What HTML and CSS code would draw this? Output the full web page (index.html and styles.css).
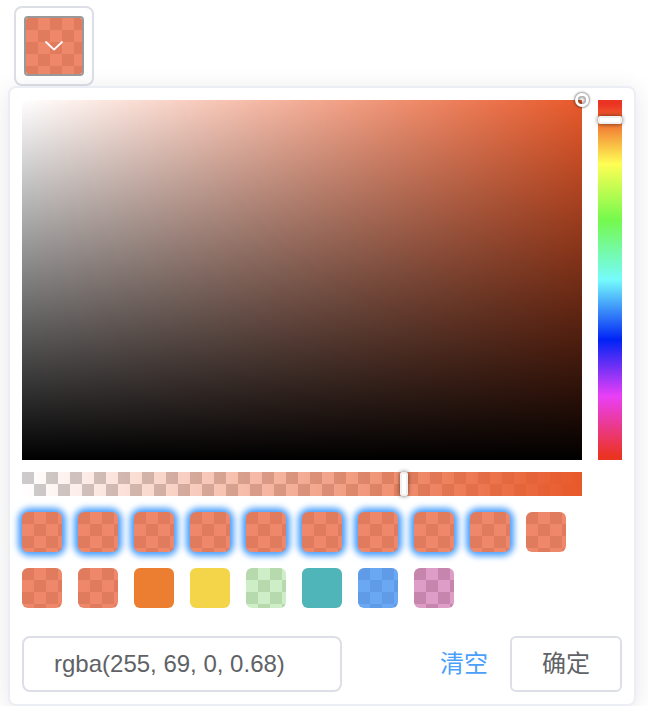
FILE: index.html
```html
<!DOCTYPE html>
<html lang="zh">
<head>
<meta charset="utf-8">
<title>Color picker</title>
<link rel="stylesheet" href="styles.css">
</head>
<body>
<div class="page">
  <div class="trigger">
    <span class="trigger-color">
      <span class="trigger-fill"></span>
      <svg class="arrow" width="18" height="10" viewBox="0 0 18 10"><polyline points="1,1 9,8.6 17,1" fill="none" stroke="#fff" stroke-width="1.8" stroke-linecap="round" stroke-linejoin="round"/></svg>
    </span>
  </div>
  <div class="dropdown">
    <div class="main">
      <div class="sv">
        <div class="sv-white"><div class="sv-black"></div></div>
        <div class="sv-cursor"></div>
      </div>
      <div class="hue">
        <div class="hue-bar"></div>
        <div class="hue-thumb"></div>
      </div>
    </div>
    <div class="alpha">
      <div class="alpha-bar"></div>
      <div class="alpha-thumb"></div>
    </div>
    <div class="predefine">
      <div class="sw sel"><div class="fill c-org"></div></div>
      <div class="sw sel"><div class="fill c-org"></div></div>
      <div class="sw sel"><div class="fill c-org"></div></div>
      <div class="sw sel"><div class="fill c-org"></div></div>
      <div class="sw sel"><div class="fill c-org"></div></div>
      <div class="sw sel"><div class="fill c-org"></div></div>
      <div class="sw sel"><div class="fill c-org"></div></div>
      <div class="sw sel"><div class="fill c-org"></div></div>
      <div class="sw sel"><div class="fill c-org"></div></div>
      <div class="sw"><div class="fill c-org"></div></div>
      <div class="sw"><div class="fill c-org"></div></div>
      <div class="sw"><div class="fill c-org"></div></div>
      <div class="sw"><div class="fill c-orange"></div></div>
      <div class="sw"><div class="fill c-yellow"></div></div>
      <div class="sw"><div class="fill c-green"></div></div>
      <div class="sw"><div class="fill c-teal"></div></div>
      <div class="sw"><div class="fill c-blue"></div></div>
      <div class="sw"><div class="fill c-pink"></div></div>
    </div>
    <div class="btns">
      <div class="value">rgba(255, 69, 0, 0.68)</div>
      <button class="text-btn">清空</button>
      <button class="btn">确定</button>
    </div>
  </div>
</div>
</body>
</html>
```
FILE: styles.css
```css
html, body {
  margin: 0;
  padding: 0;
  background: #fff;
}
body {
  font-family: "Liberation Sans", "Noto Sans CJK SC", sans-serif;
}
.page {
  padding: 6px 0 0 0;
}
.trigger {
  box-sizing: border-box;
  width: 80px;
  height: 80px;
  margin-left: 14px;
  padding: 8px;
  border: 2px solid #dcdfe6;
  border-radius: 8px;
}
.trigger-color {
  position: relative;
  display: flex;
  align-items: center;
  justify-content: center;
  box-sizing: border-box;
  width: 100%;
  height: 100%;
  border: 2px solid #999;
  border-radius: 4px;
  overflow: hidden;
}
.trigger-fill {
  position: absolute;
  inset: 0;
  background: repeating-conic-gradient(#ef886a 0 25%, #e07b5e 0 50%) 0 0 / 24px 24px;
}
.arrow {
  position: relative;
}
.dropdown {
  box-sizing: content-box;
  width: 600px;
  margin-left: 8px;
  padding: 12px;
  border: 2px solid #ebeef5;
  border-radius: 8px;
  background: #fff;
  box-shadow: 0 4px 24px rgba(0, 0, 0, 0.1);
}
.main {
  display: flex;
  gap: 16px;
  margin-bottom: 12px;
}
.sv {
  position: relative;
  width: 560px;
  height: 360px;
  background: rgb(232, 89, 42);
}
.sv-white {
  width: 100%;
  height: 100%;
  background: linear-gradient(to right, #fff, rgba(255, 255, 255, 0));
}
.sv-black {
  width: 100%;
  height: 100%;
  background: linear-gradient(to top, #000, rgba(0, 0, 0, 0));
}
.sv-cursor {
  position: absolute;
  left: 556px;
  top: -4px;
  width: 8px;
  height: 8px;
  border-radius: 50%;
  box-shadow: 0 0 0 3px #fff, inset 0 0 2px 2px rgba(0, 0, 0, 0.3), 0 0 2px 4px rgba(0, 0, 0, 0.4);
}
.hue {
  position: relative;
  box-sizing: border-box;
  width: 24px;
  height: 360px;
  padding: 4px 0;
  background: #eb3323;
}
.hue-bar {
  height: 100%;
  background: linear-gradient(to bottom, #eb3323 0%, #fffe54 17%, #75f94d 33%, #75fbfd 50%, #0023f5 67%, #ea3ff7 83%, #eb3323 100%);
}
.hue-thumb {
  position: absolute;
  left: 0;
  top: 16px;
  box-sizing: border-box;
  width: 24px;
  height: 8px;
  border-radius: 2px;
  background: #fff;
  border: 2px solid #f0f0f0;
  box-shadow: 0 0 4px rgba(0, 0, 0, 0.6);
}
.alpha {
  position: relative;
  width: 560px;
  height: 24px;
  background: repeating-conic-gradient(#fff 0 25%, #cccccc 0 50%) 0 0 / 24px 24px;
}
.alpha-bar {
  height: 100%;
  background: linear-gradient(to right, rgba(232, 89, 42, 0) 0%, rgb(232, 89, 42) 100%);
}
.alpha-thumb {
  position: absolute;
  top: 0;
  left: 378px;
  box-sizing: border-box;
  width: 8px;
  height: 24px;
  border-radius: 2px;
  background: #fff;
  border: 2px solid #f0f0f0;
  box-shadow: 0 0 4px rgba(0, 0, 0, 0.6);
}
.predefine {
  display: grid;
  grid-template-columns: repeat(10, 40px);
  gap: 16px;
  margin-top: 16px;
  padding-bottom: 16px;
}
.sw {
  width: 40px;
  height: 40px;
  border-radius: 8px;
}
.sw.sel {
  box-shadow: 0 0 6px 4px #4a9ffb;
}
.fill {
  width: 100%;
  height: 100%;
  border-radius: 6px;
}
.c-org {
  background: repeating-conic-gradient(#ef886a 0 25%, #e07b5e 0 50%) 0 0 / 24px 24px;
}
.c-orange {
  background: #ec7e31;
}
.c-yellow {
  background: #f4d54a;
}
.c-green {
  background: repeating-conic-gradient(#cdeec6 0 25%, #b6d9ae 0 50%) 0 0 / 24px 24px;
}
.c-teal {
  background: #50b5b9;
}
.c-blue {
  background: repeating-conic-gradient(#6ba8f4 0 25%, #5f9be7 0 50%) 0 0 / 24px 24px;
}
.c-pink {
  background: repeating-conic-gradient(#dd9dc6 0 25%, #c585ad 0 50%) 0 0 / 24px 24px;
}
.btns {
  display: flex;
  align-items: center;
  margin-top: 12px;
}
.value {
  box-sizing: border-box;
  width: 320px;
  height: 56px;
  margin-right: auto;
  padding: 0 30px;
  border: 2px solid #dcdfe6;
  border-radius: 8px;
  font-size: 24px;
  line-height: 52px;
  color: #606266;
  white-space: nowrap;
}
.text-btn {
  box-sizing: border-box;
  height: 56px;
  padding: 14px 0;
  border: 2px solid transparent;
  background: transparent;
  font-family: "Liberation Sans", "Noto Sans CJK SC", sans-serif;
  font-size: 24px;
  line-height: 1;
  color: #4a9ffb;
}
.btn {
  box-sizing: border-box;
  width: 112px;
  height: 56px;
  margin-left: 20px;
  padding: 14px 30px;
  border: 2px solid #dcdfe6;
  border-radius: 6px;
  background: #fff;
  font-family: "Liberation Sans", "Noto Sans CJK SC", sans-serif;
  font-size: 24px;
  line-height: 1;
  color: #606266;
}
```
